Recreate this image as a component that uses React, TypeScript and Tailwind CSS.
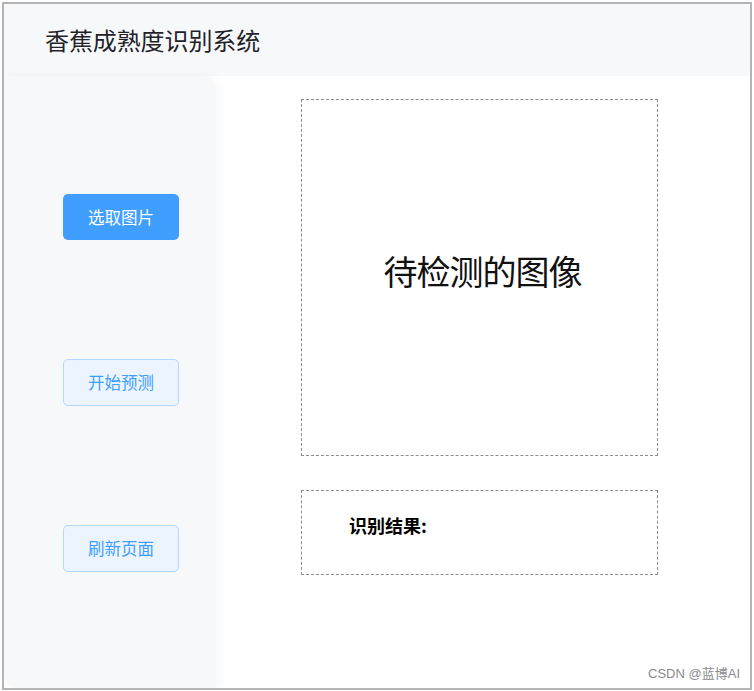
import React from "react";

const cjk = '"Noto Sans CJK SC", "Noto Sans", sans-serif';

export default function App() {
  return (
    <div className="relative w-[754px] h-[691px] bg-white pl-[2px] pt-[2px]" style={{ fontFamily: cjk }}>
      <div className="w-[750px] h-[688px] border-2 border-[#b4b4b4] bg-[#f7f8fa] flex flex-col overflow-hidden">
        <header className="h-[72px] shrink-0 flex items-center pl-[41px]">
          <h1 className="text-[24px] text-[#1f2329] leading-none tracking-[-0.1px]">香蕉成熟度识别系统</h1>
        </header>
        <div className="flex flex-1 bg-white">
          <aside className="w-[212px] shrink-0 bg-[#f7f8fa] rounded-bl-[14px] rounded-tr-[14px] shadow-[4px_0_10px_rgba(0,0,0,0.03)] flex flex-col pl-[59px] pt-[118px] gap-[119px]">
            <button className="w-[116px] h-[46px] rounded-[5px] bg-[#409eff] text-white text-[16.5px]">选取图片</button>
            <button className="w-[116px] h-[47px] rounded-[5px] bg-[#ecf5ff] border border-[#b3d8ff] text-[#409eff] text-[16.5px]">开始预测</button>
            <button className="w-[116px] h-[47px] rounded-[5px] bg-[#ecf5ff] border border-[#b3d8ff] text-[#409eff] text-[16.5px]">刷新页面</button>
          </aside>
          <main className="flex-1 pl-[85px] pt-[23px] flex flex-col">
            <div className="w-[357px] h-[357px] border border-dashed border-[#8c8c8c] flex items-center justify-center pb-[14px] pl-[6px]">
              <span className="text-[34px] text-[#111] tracking-[-1px]">待检测的图像</span>
            </div>
            <div className="mt-[34px] w-[357px] h-[85px] border border-dashed border-[#8c8c8c] pl-[47px] pt-[21px]">
              <span className="text-[18px] font-bold text-black">识别结果:</span>
            </div>
          </main>
        </div>
      </div>
      <div className="absolute right-[14px] bottom-[8px] text-[13px] text-[#8a8a8a]" style={{ fontFamily: '"Liberation Sans", "Noto Sans CJK SC", sans-serif' }}>
        CSDN @蓝博AI
      </div>
    </div>
  );
}
